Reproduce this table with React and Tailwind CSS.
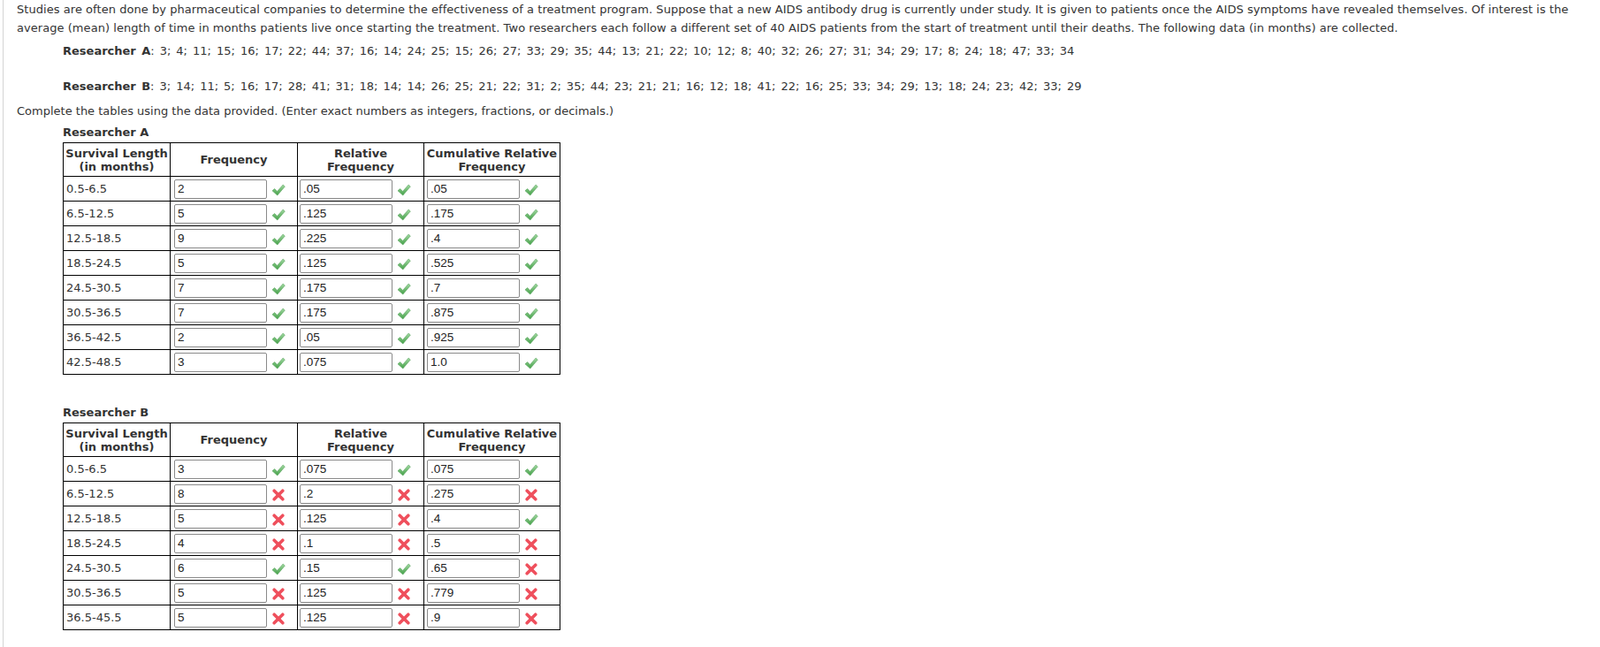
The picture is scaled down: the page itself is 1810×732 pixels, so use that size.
import React from "react";

const rowsA = [
  ["0.5-6.5", "2", ".05", ".05", [1, 1, 1]],
  ["6.5-12.5", "5", ".125", ".175", [1, 1, 1]],
  ["12.5-18.5", "9", ".225", ".4", [1, 1, 1]],
  ["18.5-24.5", "5", ".125", ".525", [1, 1, 1]],
  ["24.5-30.5", "7", ".175", ".7", [1, 1, 1]],
  ["30.5-36.5", "7", ".175", ".875", [1, 1, 1]],
  ["36.5-42.5", "2", ".05", ".925", [1, 1, 1]],
  ["42.5-48.5", "3", ".075", "1.0", [1, 1, 1]],
];

const rowsB = [
  ["0.5-6.5", "3", ".075", ".075", [1, 1, 1]],
  ["6.5-12.5", "8", ".2", ".275", [0, 0, 0]],
  ["12.5-18.5", "5", ".125", ".4", [0, 0, 1]],
  ["18.5-24.5", "4", ".1", ".5", [0, 0, 0]],
  ["24.5-30.5", "6", ".15", ".65", [1, 1, 0]],
  ["30.5-36.5", "5", ".125", ".779", [0, 0, 0]],
  ["36.5-45.5", "5", ".125", ".9", [0, 0, 0]],
];

const Check = () => (
  <svg width="16" height="14" viewBox="0 0 16 14" className="mb-[3px] shrink-0">
    <defs>
      <linearGradient id="chk" x1="0" y1="0" x2="0" y2="1">
        <stop offset="0" stopColor="#a3d9a3" />
        <stop offset="1" stopColor="#43a047" />
      </linearGradient>
    </defs>
    <path d="M1 7.8 L3.6 5.6 L6.6 8.4 L13.2 1 L15.3 3 L6.8 13 Z" fill="url(#chk)" stroke="#55a35a" strokeWidth="0.6" strokeLinejoin="round" />
  </svg>
);

const Cross = () => (
  <svg width="16" height="14" viewBox="0 0 16 14" className="mb-[3px] shrink-0">
    <path d="M3.2 2.2 L12.8 11.8 M12.8 2.2 L3.2 11.8" stroke="#ef4f5c" strokeWidth="3.6" strokeLinecap="round" />
  </svg>
);

const Answer = ({ value, ok, pad }) => (
  <td className={`border border-black ${pad} pr-0 py-0 align-middle`}>
    <div className="flex items-end gap-[5px]">
      <input
        readOnly
        value={value}
        className="w-[105px] h-[22px] border border-[#8a8a8a] rounded-[2px] px-[3px] text-[13.5px] text-[#222] bg-white outline-none"
        style={{ fontFamily: '"Liberation Sans", Arial, sans-serif' }}
      />
      {ok ? <Check /> : <Cross />}
    </div>
  </td>
);

const FreqTable = ({ title, rows, top }) => (
  <div className={`pl-[52px] ${top}`}>
    <div className="font-bold leading-[21px]">{title}</div>
    <table className="border-collapse table-fixed mt-[1px]">
      <colgroup>
        <col className="w-[121px]" />
        <col className="w-[144px]" />
        <col className="w-[143px]" />
        <col className="w-[154px]" />
      </colgroup>
      <thead>
        <tr className="h-[38px] font-bold leading-[15px]">
          <th className="border border-black p-0 whitespace-nowrap">Survival Length<br />(in months)</th>
          <th className="border border-black p-0">Frequency</th>
          <th className="border border-black p-0">Relative<br />Frequency</th>
          <th className="border border-black p-0 whitespace-nowrap">Cumulative Relative<br />Frequency</th>
        </tr>
      </thead>
      <tbody>
        {rows.map((r, i) => (
          <tr key={i} className="h-[28px]">
            <td className="border border-black pl-[3px] py-0 align-middle">{r[0]}</td>
            <Answer value={r[1]} ok={r[4][0]} pad="pl-[4px]" />
            <Answer value={r[2]} ok={r[4][1]} pad="pl-[2px]" />
            <Answer value={r[3]} ok={r[4][2]} pad="pl-[3px]" />
          </tr>
        ))}
      </tbody>
    </table>
  </div>
);

export default function App() {
  return (
    <div className="w-[1810px] h-[732px] bg-white overflow-hidden">
      <div
        className="ml-[3px] h-full border-l border-[#d4d4d4] pl-[15px] pr-[10px] text-[13px] text-[#333] leading-[21px]"
        style={{ fontFamily: '"DejaVu Sans", Verdana, sans-serif' }}
      >
        <p className="tracking-[0.05px]">
          Studies are often done by pharmaceutical companies to determine the effectiveness of a treatment program. Suppose that a new AIDS antibody drug is currently under study. It is given to patients once the AIDS symptoms have revealed themselves. Of interest is the average (mean) length of time in months patients live once starting the treatment. Two researchers each follow a different set of 40 AIDS patients from the start of treatment until their deaths. The following data (in months) are collected.
        </p>
        <p className="pl-[52px] mt-[5px] [word-spacing:1.9px]">
          <b>Researcher A</b>: 3; 4; 11; 15; 16; 17; 22; 44; 37; 16; 14; 24; 25; 15; 26; 27; 33; 29; 35; 44; 13; 21; 22; 10; 12; 8; 40; 32; 26; 27; 31; 34; 29; 17; 8; 24; 18; 47; 33; 34
        </p>
        <p className="pl-[52px] mt-[19px] [word-spacing:1.9px]">
          <b>Researcher B</b>: 3; 14; 11; 5; 16; 17; 28; 41; 31; 18; 14; 14; 26; 25; 21; 22; 31; 2; 35; 44; 23; 21; 21; 16; 12; 18; 41; 22; 16; 25; 33; 34; 29; 13; 18; 24; 23; 42; 33; 29
        </p>
        <p className="mt-[7px]">
          Complete the tables using the data provided. (Enter exact numbers as integers, fractions, or decimals.)
        </p>
        <FreqTable title="Researcher A" rows={rowsA} top="mt-[3px]" />
        <FreqTable title="Researcher B" rows={rowsB} top="mt-[32px]" />
      </div>
    </div>
  );
}
